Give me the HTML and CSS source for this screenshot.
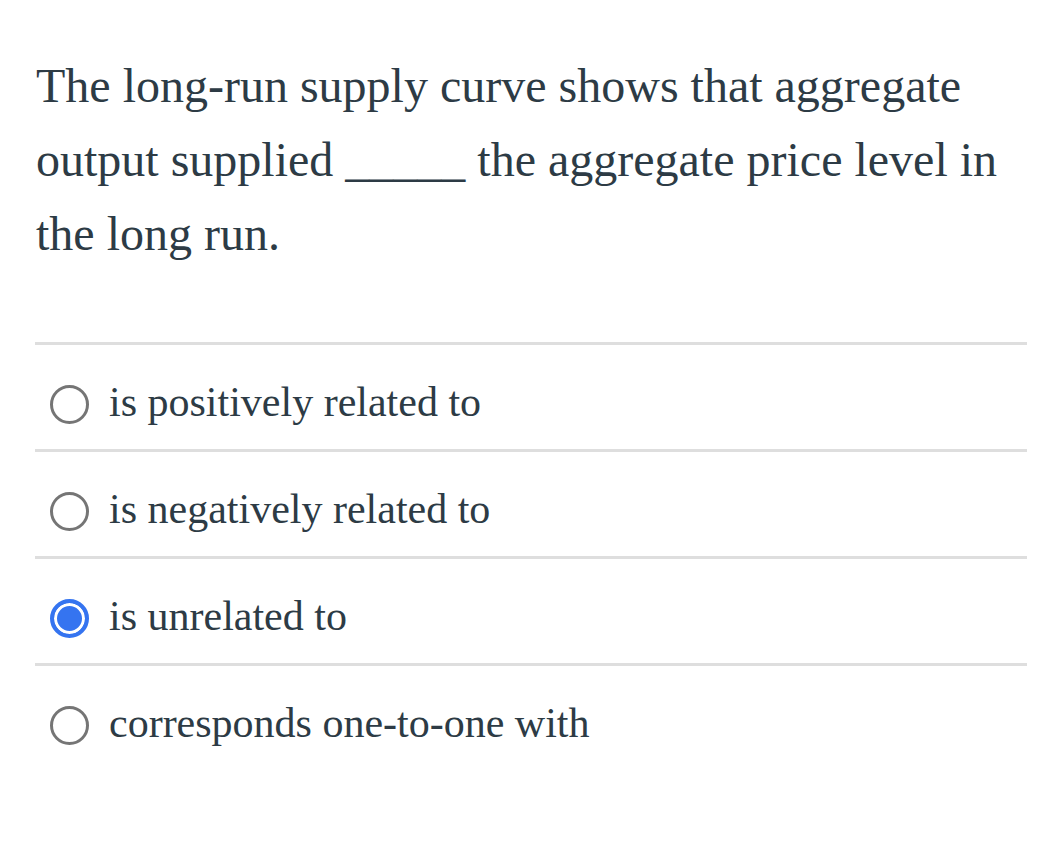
FILE: index.html
```html
<!DOCTYPE html>
<html>
<head>
<meta charset="utf-8">
<link rel="stylesheet" href="styles.css">
</head>
<body>
<div class="quiz">
  <p class="question">The long-run supply curve shows that aggregate output supplied <span class="blank">_____</span> the aggregate price level in the long run.</p>
  <ul class="options">
    <li class="option"><span class="radio"></span><span class="label">is positively related to</span></li>
    <li class="option"><span class="radio"></span><span class="label">is negatively related to</span></li>
    <li class="option"><span class="radio checked"></span><span class="label">is unrelated to</span></li>
    <li class="option"><span class="radio"></span><span class="label">corresponds one-to-one with</span></li>
  </ul>
</div>
</body>
</html>
```
FILE: styles.css
```css
html, body {
  margin: 0;
  padding: 0;
  background: #ffffff;
}
.quiz {
  width: 992px;
  padding: 49px 0 0 35px;
  font-family: "Liberation Serif", "Times New Roman", serif;
  color: #2d3b45;
}
.question {
  margin: 0;
  padding-left: 1px;
  font-size: 48px;
  line-height: 74px;
}
.options {
  list-style: none;
  margin: 71px 0 0;
  padding: 0;
  border-top: 3px solid #dedede;
}
.option {
  box-sizing: border-box;
  display: flex;
  align-items: center;
  height: 107px;
  padding-top: 14px;
  padding-bottom: 0;
  border-bottom: 3px solid #dedede;
  font-size: 42px;
}
.option:last-child {
  border-bottom-color: transparent;
}
.radio {
  box-sizing: border-box;
  width: 39px;
  height: 39px;
  margin-left: 15px;
  margin-right: 20px;
  border: 3px solid #757575;
  border-radius: 50%;
  background: #fff;
  flex: none;
}
.radio.checked {
  border: 4px solid #3574f0;
  background: #3574f0;
  box-shadow: inset 0 0 0 3px #fff;
}
.label {
  line-height: 1;
  position: relative;
  top: -2px;
}
```
